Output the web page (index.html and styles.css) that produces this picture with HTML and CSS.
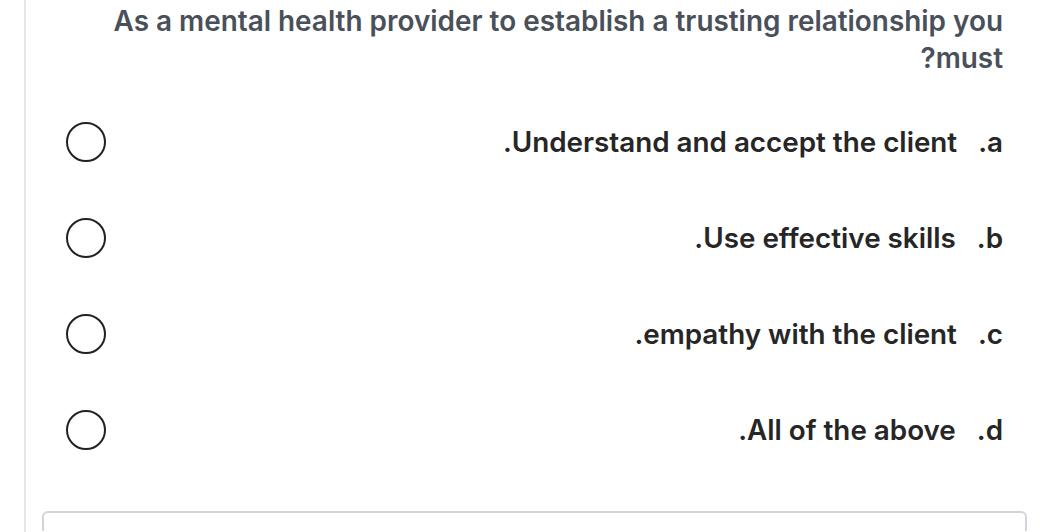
FILE: index.html
```html
<!DOCTYPE html>
<html lang="en">
<head>
<meta charset="utf-8">
<title>Question</title>
<link rel="stylesheet" href="styles.css">
</head>
<body>
<div class="page">
  <div class="question">As a mental health provider to establish a trusting relationship you <span class="nowrap">?must</span></div>
  <ul class="options">
    <li class="option">
      <span class="radio"></span>
      <span class="label"><span class="text">.Understand and accept the client</span><span class="letter">.a</span></span>
    </li>
    <li class="option">
      <span class="radio"></span>
      <span class="label"><span class="text">.Use effective skills</span><span class="letter">.b</span></span>
    </li>
    <li class="option">
      <span class="radio"></span>
      <span class="label"><span class="text">.empathy with the client</span><span class="letter">.c</span></span>
    </li>
    <li class="option">
      <span class="radio"></span>
      <span class="label"><span class="text">.All of the above</span><span class="letter">.d</span></span>
    </li>
  </ul>
  <div class="answer-box"></div>
</div>
</body>
</html>
```

FILE: styles.css
```css
html, body {
  margin: 0;
  padding: 0;
  background: #ffffff;
  height: 100%;
  overflow: hidden;
}
body {
  font-family: Inter, "Noto Sans", "Liberation Sans", sans-serif;
}
.page {
  margin-left: 24px;
  border-left: 2px solid #e5e7eb;
  height: 100%;
  box-sizing: border-box;
  padding-top: 3px;
  overflow: hidden;
}
.question {
  color: #4a5059;
  font-size: 27.9px;
  font-weight: 600;
  line-height: 37px;
  text-align: right;
  padding-left: 40px;
  padding-right: 37px;
}
.nowrap {
  white-space: nowrap;
}
.options {
  list-style: none;
  margin: 17px 0 0 0;
  padding: 0;
}
.option {
  display: flex;
  align-items: center;
  justify-content: space-between;
  height: 96px;
  padding-left: 40px;
  padding-right: 37px;
}
.radio {
  width: 36px;
  height: 36px;
  border: 2px solid #222222;
  border-radius: 50%;
  flex: none;
}
.label {
  display: flex;
  gap: 21px;
  color: #262626;
  font-size: 27.8px;
  font-weight: 600;
}
.answer-box {
  margin: 33px 13px 0 16px;
  height: 18px;
  border: 2px solid #d1d5db;
  border-bottom: none;
  border-radius: 6px 6px 0 0;
}
```
